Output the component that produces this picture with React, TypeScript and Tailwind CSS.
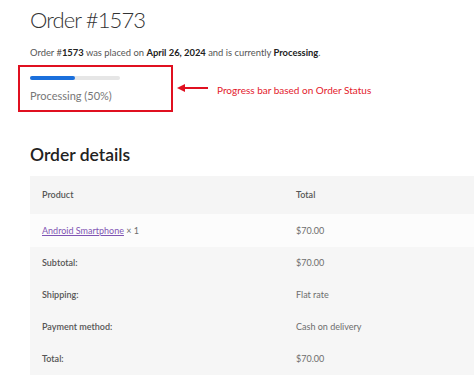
import React from "react";

const font = { fontFamily: "Lato, 'Noto Sans', sans-serif" };

function Row({ label, value, bg }: { label: React.ReactNode; value: React.ReactNode; bg: string }) {
  return (
    <div className={`grid grid-cols-[266px_1fr] items-center ${bg}`}>
      <div className="pl-3">{label}</div>
      <div>{value}</div>
    </div>
  );
}

export default function App() {
  return (
    <div className="h-[378px] w-[474px] overflow-hidden bg-white pl-[30px] text-[#6d6d6d]" style={font}>
      <h1 className="pt-[5px] text-[22px] leading-[30px] font-light tracking-[-0.9px] text-[#333]">Order #1573</h1>
      <p className="mt-[11px] text-[9.4px] leading-[14px] text-[#555]">
        Order #<b className="font-bold text-[#222]">1573</b> was placed on{" "}
        <b className="font-bold text-[#222]">April 26, 2024</b> and is currently{" "}
        <b className="font-bold text-[#222]">Processing</b>.
      </p>

      <div className="relative mt-[5px] -ml-[12px] flex items-center">
        <div className="h-[47px] w-[155px] border-2 border-[#e01020] pt-[9px] pl-[10px]">
          <div className="h-[4px] w-[90px] rounded-full bg-[#e6e6e6]">
            <div className="h-full w-1/2 rounded-full bg-[#1a6fdc]" />
          </div>
          <div className="mt-[9px] text-[11px] leading-[14px] text-[#777]">Processing (50%)</div>
        </div>
        <svg width="32" height="10" viewBox="0 0 32 10" className="ml-[4px] mt-[-2px]">
          <line x1="6" y1="5" x2="31" y2="5" stroke="#e01020" strokeWidth="2" />
          <path d="M0 5 L8 1 L8 9 Z" fill="#e01020" />
        </svg>
        <span className="ml-[8px] mt-[3px] text-[10px] text-[#e3202c]">Progress bar based on Order Status</span>
      </div>

      <h2 className="mt-[31px] text-[17.5px] leading-[24px] font-semibold text-[#222]">Order details</h2>

      <div className="mt-[9px] text-[9px] text-[#6d6d6d]">
        <div className="h-[38px]">
          <Row bg="bg-[#f5f5f5] h-full" label={<span className="font-semibold text-[#555]">Product</span>} value={<span className="font-semibold text-[#555]">Total</span>} />
        </div>
        <div className="h-[33px]">
          <Row
            bg="bg-[#fcfcfc] h-full"
            label={
              <span>
                <span className="text-[#7f54b3] underline">Android Smartphone</span> × 1
              </span>
            }
            value="$70.00"
          />
        </div>
        {[
          ["Subtotal:", "$70.00"],
          ["Shipping:", "Flat rate"],
          ["Payment method:", "Cash on delivery"],
          ["Total:", "$70.00"],
        ].map(([l, v]) => (
          <div key={l} className="h-[32px]">
            <Row bg="bg-[#f6f6f6] h-full" label={<span className="font-semibold text-[#555]">{l}</span>} value={v} />
          </div>
        ))}
      </div>
    </div>
  );
}
